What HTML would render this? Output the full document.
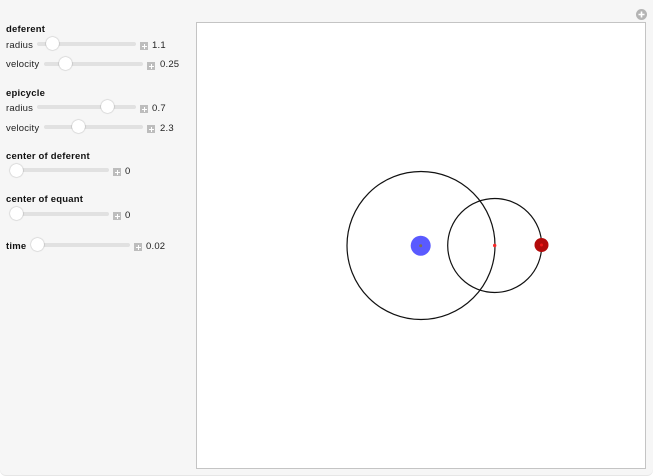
<!DOCTYPE html>
<html><head><meta charset="utf-8">
<style>
html,body{margin:0;padding:0;background:#fff;}
body{width:653px;height:476px;position:relative;overflow:hidden;font-family:"Liberation Sans",sans-serif;color:#222;}
#panel{position:absolute;left:0;top:0;width:653px;height:475px;background:#f6f6f6;border-radius:0 0 6px 6px;box-shadow:0 1px 0 #e6e6e6;}
#plot{position:absolute;left:196px;top:22px;width:448px;height:445px;background:#fff;border:1px solid #c4c4c4;}
.t{position:absolute;font-size:9.5px;line-height:12px;margin-top:1px;white-space:nowrap;letter-spacing:.2px;}
.b{font-weight:bold;color:#111;}
.tr{position:absolute;height:4px;background:#e1e1e1;border-radius:2px;}
.k{position:absolute;width:13px;height:13px;border-radius:50%;background:#fff;box-shadow:0 0 1.5px rgba(0,0,0,.4);}
.p{position:absolute;width:8px;height:8px;background:#bdbdbd;}
.p:before{content:"";position:absolute;left:1.5px;top:3.5px;width:5px;height:1px;background:#fff;}
.p:after{content:"";position:absolute;left:3.5px;top:1.5px;width:1px;height:5px;background:#fff;}
</style></head><body>
<div id="panel"></div>
<div id="plot"></div>
<svg style="position:absolute;left:635px;top:8px" width="13" height="13" viewBox="0 0 13 13"><circle cx="6.5" cy="6.5" r="5.5" fill="#b4b4b4"/><path d="M6.5 3.5v6M3.5 6.5h6" stroke="#fff" stroke-width="1.6"/></svg>

<div class="t b" style="left:6px;top:23px">deferent</div>
<div class="t" style="left:6px;top:39px">radius</div>
<div class="tr" style="left:37px;top:42px;width:99px"></div>
<div class="k" style="left:46px;top:37px"></div>
<div class="p" style="left:140px;top:42px"></div>
<div class="t" style="left:152px;top:39px">1.1</div>

<div class="t" style="left:6px;top:58px">velocity</div>
<div class="tr" style="left:44px;top:62px;width:99px"></div>
<div class="k" style="left:58.5px;top:57px"></div>
<div class="p" style="left:147px;top:62px"></div>
<div class="t" style="left:160px;top:58px">0.25</div>

<div class="t b" style="left:6px;top:87px">epicycle</div>
<div class="t" style="left:6px;top:102px">radius</div>
<div class="tr" style="left:37px;top:105px;width:99px"></div>
<div class="k" style="left:101px;top:100px"></div>
<div class="p" style="left:140px;top:105px"></div>
<div class="t" style="left:152px;top:102px">0.7</div>

<div class="t" style="left:6px;top:122px">velocity</div>
<div class="tr" style="left:44px;top:125px;width:99px"></div>
<div class="k" style="left:72px;top:120px"></div>
<div class="p" style="left:147px;top:125px"></div>
<div class="t" style="left:160px;top:122px">2.3</div>

<div class="t b" style="left:6px;top:150px">center of deferent</div>
<div class="tr" style="left:10px;top:168px;width:99px"></div>
<div class="k" style="left:10px;top:164px"></div>
<div class="p" style="left:113px;top:168px"></div>
<div class="t" style="left:125px;top:165px">0</div>

<div class="t b" style="left:6px;top:193px">center of equant</div>
<div class="tr" style="left:10px;top:212px;width:99px"></div>
<div class="k" style="left:10px;top:207px"></div>
<div class="p" style="left:113px;top:212px"></div>
<div class="t" style="left:125px;top:209px">0</div>

<div class="t b" style="left:6px;top:240px">time</div>
<div class="tr" style="left:31px;top:243px;width:99px"></div>
<div class="k" style="left:31px;top:238px"></div>
<div class="p" style="left:134px;top:243px"></div>
<div class="t" style="left:146px;top:240px">0.02</div>

<svg style="position:absolute;left:0;top:0" width="653" height="476" viewBox="0 0 653 476">
<circle cx="421" cy="245.5" r="74" fill="none" stroke="#111" stroke-width="1.2"/>
<circle cx="494.7" cy="245.5" r="47" fill="none" stroke="#111" stroke-width="1.2"/>
<circle cx="420.7" cy="245.7" r="10" fill="#5a5aff"/>
<circle cx="420.7" cy="245.7" r="1.5" fill="#7f7050"/>
<circle cx="541.5" cy="245" r="7" fill="#b30a0a"/>
<circle cx="541.5" cy="245" r="1.5" fill="#f01818"/>
<circle cx="494.7" cy="245.5" r="1.7" fill="#f52a2a"/>
</svg>
</body></html>
